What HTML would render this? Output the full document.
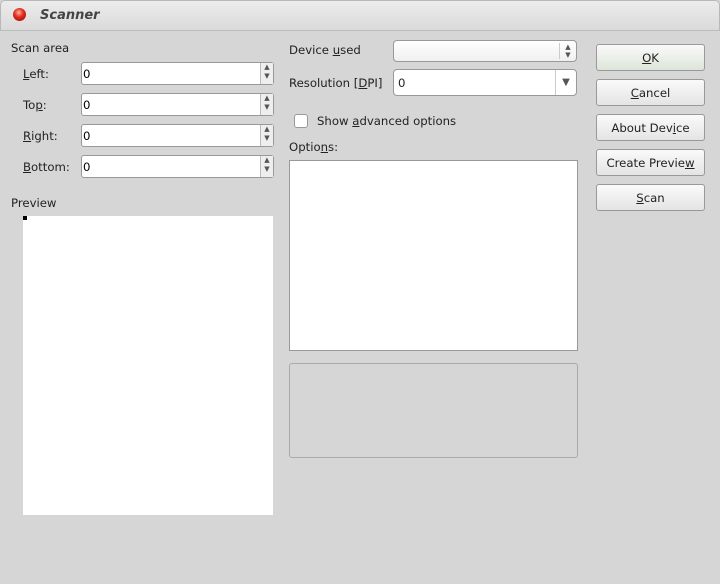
<!DOCTYPE html>
<html><head><style>
body{margin:0;width:720px;height:584px;background:#d6d6d6;font-family:"DejaVu Sans","Liberation Sans",sans-serif;font-size:11.7px;color:#222;position:relative;overflow:hidden}
.a{position:absolute}
.title{left:0;top:0;width:718px;height:29px;background:linear-gradient(#ececec,#dadada);border:1px solid #b8b8b8;border-bottom:1px solid #bcbcbc;border-radius:5px 5px 0 0}
.dot{left:13px;top:8px;width:13px;height:13px;border-radius:50%;background:radial-gradient(circle at 45% 35%,#ffb0a0 0,#e03020 40%,#900 100%)}
.ttl{left:40px;top:8px;font-weight:bold;font-style:italic;color:#444;font-size:13px}
.spin{width:191px;height:21px;background:#fff;border:1px solid #999;border-radius:3px}
.spin .b{position:absolute;right:0;top:0;width:12px;height:21px;border-left:1px solid #bbb;background:#eee;font-size:7px;line-height:9px;text-align:center;color:#555}
.spin .v{position:absolute;left:1px;top:4px;color:#000}
.lbl{left:23px}
.btn{left:596px;width:107px;height:25px;border:1px solid #999;border-radius:3px;background:linear-gradient(#fafafa,#e4e4e4);text-align:center;line-height:26px;color:#222}
.wbox{background:#fff}
u{text-decoration:underline}
</style></head><body>
<div class="a title"></div><div class="a dot"></div><div class="a ttl">Scanner</div>
<div class="a" style="left:11px;top:41px">Scan area</div>
<div class="a lbl" style="top:67px"><u>L</u>eft:</div>
<div class="a lbl" style="top:98px">To<u>p</u>:</div>
<div class="a lbl" style="top:129px"><u>R</u>ight:</div>
<div class="a lbl" style="top:160px"><u>B</u>ottom:</div>
<div class="a spin" style="left:81px;top:62px"><span class="v">0</span><div class="b">▲<br>▼</div></div>
<div class="a spin" style="left:81px;top:93px"><span class="v">0</span><div class="b">▲<br>▼</div></div>
<div class="a spin" style="left:81px;top:124px"><span class="v">0</span><div class="b">▲<br>▼</div></div>
<div class="a spin" style="left:81px;top:155px"><span class="v">0</span><div class="b">▲<br>▼</div></div>
<div class="a" style="left:11px;top:196px">Preview</div>
<div class="a wbox" style="left:23px;top:216px;width:250px;height:299px"></div>
<div class="a" style="left:23px;top:216px;width:4px;height:4px;background:#000"></div>
<div class="a" style="left:289px;top:43px">Device <u>u</u>sed</div>
<div class="a" style="left:289px;top:76px">Resolution [<u>D</u>PI]</div>
<div class="a" style="left:393px;top:40px;width:182px;height:20px;border:1px solid #999;border-radius:4px;background:linear-gradient(#fff,#f0f0f0)"><div class="a" style="right:0;top:2px;width:16px;height:16px;border-left:1px solid #ccc;font-size:7px;line-height:8px;text-align:center;color:#555">▲<br>▼</div></div>
<div class="a" style="left:393px;top:69px;width:182px;height:25px;border:1px solid #999;border-radius:4px;background:#fff"><span class="a" style="left:4px;top:6px">0</span><div class="a" style="right:0;top:0;width:20px;height:25px;border-left:1px solid #ccc;text-align:center;line-height:25px;font-size:10px;color:#555">▼</div></div>
<div class="a" style="left:294px;top:114px;width:12px;height:12px;border:1px solid #999;border-radius:3px;background:#fff"></div>
<div class="a" style="left:317px;top:114px">Show <u>a</u>dvanced options</div>
<div class="a" style="left:289px;top:140px">Optio<u>n</u>s:</div>
<div class="a wbox" style="left:289px;top:160px;width:287px;height:189px;border:1px solid #999"></div>
<div class="a" style="left:289px;top:363px;width:287px;height:93px;border:1px solid #aaa;border-radius:3px"></div>
<div class="a btn" style="top:44px;background:linear-gradient(#fafafa,#dde5d8)"><u>O</u>K</div>
<div class="a btn" style="top:79px"><u>C</u>ancel</div>
<div class="a btn" style="top:114px">About Dev<u>i</u>ce</div>
<div class="a btn" style="top:149px">Create Previe<u>w</u></div>
<div class="a btn" style="top:184px"><u>S</u>can</div>
</body></html>
